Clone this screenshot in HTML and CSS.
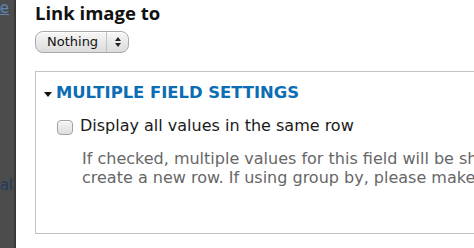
FILE: index.html
```html
<!DOCTYPE html>
<html>
<head>
<meta charset="utf-8">
<link rel="stylesheet" href="styles.css">
</head>
<body>
<div class="page">
  <aside class="sidebar">
    <a class="side-link" href="#">e</a>
    <span class="side-text">al</span>
  </aside>
  <main class="main">
    <div class="form-item">
      <label class="label">Link image to</label>
      <div class="select">
        <span class="select-value">Nothing</span>
        <span class="select-arrows">
          <span class="arrow-up"></span>
          <span class="arrow-down"></span>
        </span>
      </div>
    </div>
    <section class="fieldset">
      <div class="legend">
        <span class="toggle"></span>
        <span class="legend-text">MULTIPLE FIELD SETTINGS</span>
      </div>
      <div class="check-row">
        <span class="checkbox"></span>
        <span class="check-label">Display all values in the same row</span>
      </div>
      <p class="description">If checked, multiple values for this field will be shown in the same row. If not checked, each value in this field will<br>create a new row. If using group by, please make sure to group by "Entity ID" for this setting to have any effect.</p>
    </section>
  </main>
</div>
</body>
</html>
```

FILE: styles.css
```css
html, body {
  margin: 0;
  padding: 0;
  background: #ffffff;
}
body {
  width: 474px;
  height: 248px;
  overflow: hidden;
  font-family: "DejaVu Sans", Verdana, sans-serif;
}
.page {
  display: flex;
  height: 248px;
}
.sidebar {
  width: 14px;
  flex: none;
  background: #4c4c4c;
  border-right: 2px solid #393939;
  display: flex;
  flex-direction: column;
  align-items: flex-end;
  overflow: hidden;
  font-size: 15px;
  line-height: 16px;
}
.side-link {
  color: #5d86b3;
  text-decoration: underline;
  margin-right: 5px;
}
.side-text {
  color: #1f3d5e;
  margin-top: 161px;
  margin-right: 1px;
}
.main {
  flex: 1;
  padding: 3px 0 0 19px;
  min-width: 0;
}
.label {
  display: block;
  font-family: "Open Sans", "DejaVu Sans", sans-serif;
  font-weight: bold;
  font-size: 18.5px;
  line-height: 19px;
  color: #111111;
}
.select {
  margin-top: 9px;
  width: 92px;
  height: 20px;
  border: 1px solid #a9a9a9;
  border-radius: 8px;
  background: linear-gradient(#f7f7f7, #e9e9e9 50%, #dcdcdc);
  box-shadow: inset 0 1px 0 #ffffff;
  display: flex;
  align-items: center;
}
.select-value {
  padding-left: 11px;
  width: 59px;
  font-size: 13px;
  line-height: 20px;
  color: #111111;
  border-right: 1px solid #c2c2c2;
  height: 20px;
}
.select-arrows {
  flex: 1;
  display: flex;
  flex-direction: column;
  align-items: center;
  gap: 2px;
}
.arrow-up {
  width: 0;
  height: 0;
  border-left: 3.5px solid transparent;
  border-right: 3.5px solid transparent;
  border-bottom: 4px solid #222222;
}
.arrow-down {
  width: 0;
  height: 0;
  border-left: 3.5px solid transparent;
  border-right: 3.5px solid transparent;
  border-top: 4px solid #222222;
}
.fieldset {
  margin-top: 18px;
  width: 700px;
  height: 150px;
  border: 1px solid #c3c3c3;
  padding: 11px 0 0 8px;
}
.legend {
  display: flex;
  align-items: center;
  gap: 4px;
  height: 20px;
}
.toggle {
  width: 0;
  height: 0;
  border-left: 4.5px solid transparent;
  border-right: 4.5px solid transparent;
  border-top: 5px solid #111111;
  margin-top: 2px;
}
.legend-text {
  font-weight: bold;
  font-size: 16.4px;
  line-height: 20px;
  color: #0b6db4;
}
.check-row {
  margin-top: 13px;
  margin-left: 13px;
  display: flex;
  align-items: center;
  gap: 7px;
  height: 20px;
}
.checkbox {
  width: 14px;
  height: 13px;
  border: 1px solid #a2a2a2;
  border-radius: 4px;
  background: linear-gradient(#f4f4f4, #dedede);
  box-shadow: inset 0 1px 1px #ffffff;
  margin-top: 2px;
}
.check-label {
  font-size: 16px;
  line-height: 20px;
  color: #1a1a1a;
}
.description {
  margin: 13px 0 0 38px;
  font-size: 16px;
  line-height: 19px;
  color: #676767;
  white-space: nowrap;
}
```
